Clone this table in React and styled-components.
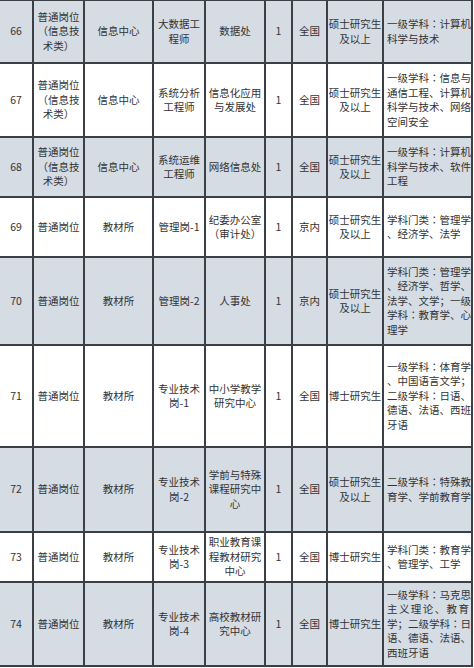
import React from "react";
import styled, { createGlobalStyle } from "styled-components";

const GlobalStyle = createGlobalStyle`
  html, body {
    margin: 0;
    padding: 0;
    background: #ffffff;
  }
  body {
    font-family: "Noto Sans CJK SC", "Noto Sans", sans-serif;
  }
`;

const rows = [
  ["66", "普通岗位\n（信息技\n术类）", "信息中心", "大数据工\n程师", "数据处", "1", "全国", "硕士研究生\n及以上", "一级学科：计算机\n科学与技术"],
  ["67", "普通岗位\n（信息技\n术类）", "信息中心", "系统分析\n工程师", "信息化应用\n与发展处", "1", "全国", "硕士研究生\n及以上", "一级学科：信息与\n通信工程、计算机\n科学与技术、网络\n空间安全"],
  ["68", "普通岗位\n（信息技\n术类）", "信息中心", "系统运维\n工程师", "网络信息处", "1", "全国", "硕士研究生\n及以上", "一级学科：计算机\n科学与技术、软件\n工程"],
  ["69", "普通岗位", "教材所", "管理岗-1", "纪委办公室\n（审计处）", "1", "京内", "硕士研究生\n及以上", "学科门类：管理学\n、经济学、法学"],
  ["70", "普通岗位", "教材所", "管理岗-2", "人事处", "1", "京内", "硕士研究生\n及以上", "学科门类：管理学\n、经济学、哲学、\n法学、文学；一级\n学科：教育学、心\n理学"],
  ["71", "普通岗位", "教材所", "专业技术\n岗-1", "中小学教学\n研究中心", "1", "全国", "博士研究生", "一级学科：体育学\n、中国语言文学；\n二级学科：日语、\n德语、法语、西班\n牙语"],
  ["72", "普通岗位", "教材所", "专业技术\n岗-2", "学前与特殊\n课程研究中\n心", "1", "全国", "硕士研究生\n及以上", "二级学科：特殊教\n育学、学前教育学"],
  ["73", "普通岗位", "教材所", "专业技术\n岗-3", "职业教育课\n程教材研究\n中心", "1", "全国", "博士研究生", "学科门类：教育学\n、管理学、工学"],
  ["74", "普通岗位", "教材所", "专业技术\n岗-4", "高校教材研\n究中心", "1", "全国", "博士研究生", "一级学科：马克思\n主义理论、教育\n学；二级学科：日\n语、德语、法语、\n西班牙语"],
];

// lines that Excel stretched across the whole cell
const justified = { "主义理论、教育": true, "学科：教育学、心": true };

const Sheet = styled.div`
  display: grid;
  grid-template-columns: 32px 49px 67px 50px 58px 25px 33px 54px 87px;
  grid-template-rows: 61px 72px 58px 58px 86px 100px 83px 48px 82px;
  gap: 2px;
  width: 473px;
  padding: 1px 2px 2px 0;
  box-sizing: border-box;
  background: #3b4047;
`;

const Cell = styled.div`
  display: flex;
  flex-direction: column;
  justify-content: center;
  align-items: ${(p) => (p.$left ? "stretch" : "center")};
  padding: ${(p) => (p.$left ? "0 2px 0 3px" : "0 1px")};
  background: ${(p) => (p.$shade ? "#d6dce4" : "#ffffff")};
  color: #333333;
  font-size: 10.5px;
  line-height: 14.5px;
  overflow: hidden;
`;

const Line = styled.span`
  display: block;
  white-space: nowrap;
  text-align: ${(p) => (p.$left ? "left" : "center")};
  text-align-last: ${(p) => (p.$justify ? "justify" : "auto")};
`;

// full-width colon sits centred in its box in the source sheet
const Colon = styled.span`
  font-family: "Noto Sans CJK TC", "Noto Sans CJK SC", sans-serif;
`;

const Tail = styled.div`
  height: 2px;
  background: #ffffff;
`;

const renderLine = (line) =>
  line.split(/(：)/).map((part, i) =>
    part === "：" ? <Colon key={i}>：</Colon> : part
  );

const App = () => {
  return (
    <>
      <GlobalStyle />
      <Sheet>
        {rows.map((row, r) =>
          row.map((text, c) => {
            const left = c === 8;
            return (
              <Cell key={`${r}-${c}`} $shade={r % 2 === 0} $left={left}>
                {text.split("\n").map((line, i) => (
                  <Line key={i} $left={left} $justify={left && justified[line]}>
                    {renderLine(line)}
                  </Line>
                ))}
              </Cell>
            );
          })
        )}
      </Sheet>
      <Tail />
    </>
  );
};

export default App;
